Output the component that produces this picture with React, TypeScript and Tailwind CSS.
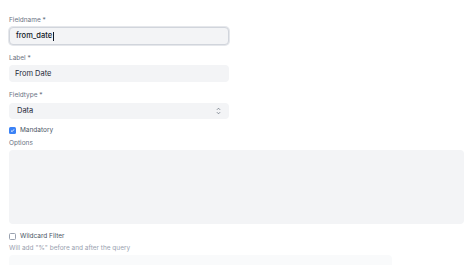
export default function App() {
  return (
    <div className="h-[265px] w-[474px] overflow-hidden bg-white pl-[9px] pr-[10px] pt-[16px] font-['Inter',sans-serif] text-gray-800">
      <div className="w-[220px]">
        <div className="text-[6.5px] leading-[8px] text-gray-500">Fieldname *</div>
        <div className="mt-[3px] flex h-[18px] items-center rounded-[4px] border border-gray-300 bg-gray-100 px-[6px] text-[7.5px] font-medium text-gray-900 shadow-[0_0_0_1px_#e5e7eb]">
          from_date<span className="ml-[0.5px] h-[9px] w-[1px] bg-gray-900" />
        </div>

        <div className="mt-[9px] text-[6.5px] leading-[8px] text-gray-500">Label *</div>
        <div className="mt-[3px] flex h-[17px] items-center rounded-[4px] bg-gray-100 px-[6px] text-[7.5px] text-gray-800">
          From Date
        </div>

        <div className="mt-[9px] text-[6.5px] leading-[8px] text-gray-500">Fieldtype *</div>
        <div className="mt-[4px] flex h-[16px] items-center justify-between rounded-[4px] bg-gray-100 pl-[8px] pr-[8px] text-[7.5px] text-gray-800">
          <span>Data</span>
          <svg width="5" height="8" viewBox="0 0 6 10" fill="none" stroke="#6b7280" strokeWidth="1">
            <path d="M1 3.5 L3 1.5 L5 3.5" />
            <path d="M1 6.5 L3 8.5 L5 6.5" />
          </svg>
        </div>

        <div className="mt-[7px] flex items-center gap-[4px]">
          <span className="flex h-[7px] w-[7px] items-center justify-center rounded-[1.5px] bg-[#3b82f6]">
            <svg width="5" height="5" viewBox="0 0 10 10" fill="none" stroke="white" strokeWidth="1.8">
              <path d="M2 5.2 L4.2 7.3 L8 2.8" />
            </svg>
          </span>
          <span className="text-[6.5px] leading-[8px] text-gray-600">Mandatory</span>
        </div>
      </div>

      <div className="mt-[5px] text-[6.5px] leading-[8px] text-gray-500">Options</div>
      <div className="mt-[3px] h-[74px] w-[455px] rounded-[4px] bg-gray-100" />

      <div className="mt-[8px] flex items-center gap-[4px]">
        <span className="h-[7px] w-[7px] rounded-[1.5px] border border-gray-400 bg-white" />
        <span className="text-[6.5px] leading-[8px] text-gray-600">Wildcard Filter</span>
      </div>
      <div className="mt-[4px] text-[6.5px] leading-[8px] text-gray-400">Will add "%" before and after the query</div>
      <div className="mt-[3px] h-[16px] w-[383px] rounded-[4px] bg-gray-50" />
    </div>
  )
}
